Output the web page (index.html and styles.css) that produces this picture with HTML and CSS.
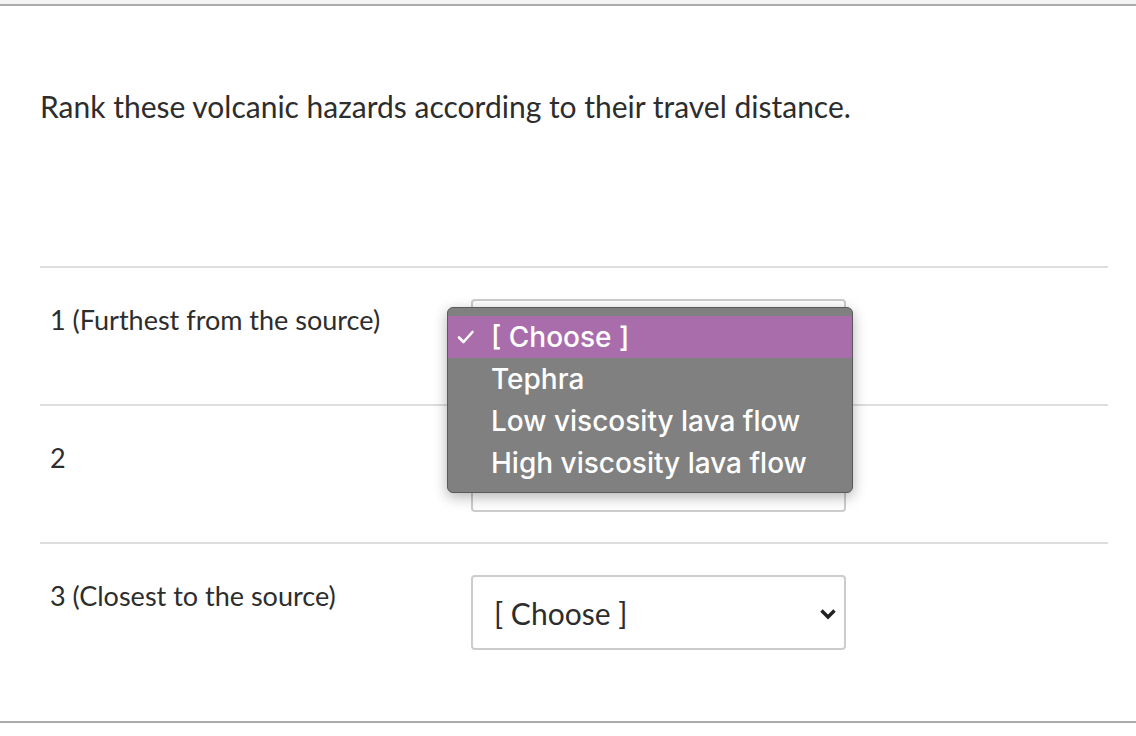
FILE: index.html
```html
<!DOCTYPE html>
<html lang="en">
<head>
    <meta charset="UTF-8">
    <title>Rank volcanic hazards</title>
    <link rel="stylesheet" href="styles.css">
</head>
<body>

<div class="top-bar"></div>

<div class="question">
    <p class="prompt">Rank these volcanic hazards according to their travel distance.</p>

    <div class="answers">
        <!-- Row 1, with the open menu -->
        <div class="answer-row">
            <div class="answer-label">1 (Furthest from the source)</div>
            <div class="select-wrap">
                <div class="select-box">
                    <span class="select-text">[ Choose ]</span>
                    <svg class="chevron" width="16" height="12" viewBox="0 0 16 12"><path d="M1.5 2.5 L8 9 L14.5 2.5" fill="none" stroke="#222" stroke-width="3.4"/></svg>
                </div>

                <div class="menu">
                    <div class="menu-item selected">
                        <svg class="check" width="18" height="14" viewBox="0 0 18 14"><path d="M2 7.5 L6.5 12 L15.5 2" fill="none" stroke="#fff" stroke-width="2.6" stroke-linecap="round" stroke-linejoin="round"/></svg>
                        [ Choose ]
                    </div>
                    <div class="menu-item">Tephra</div>
                    <div class="menu-item">Low viscosity lava flow</div>
                    <div class="menu-item">High viscosity lava flow</div>
                </div>
            </div>
        </div>

        <div class="answer-row">
            <div class="answer-label">2</div>
            <div class="select-wrap">
                <div class="select-box">
                    <span class="select-text">[ Choose ]</span>
                    <svg class="chevron" width="16" height="12" viewBox="0 0 16 12"><path d="M1.5 2.5 L8 9 L14.5 2.5" fill="none" stroke="#222" stroke-width="3.4"/></svg>
                </div>
            </div>
        </div>

        <div class="answer-row">
            <div class="answer-label">3 (Closest to the source)</div>
            <div class="select-wrap">
                <div class="select-box">
                    <span class="select-text">[ Choose ]</span>
                    <svg class="chevron" width="16" height="12" viewBox="0 0 16 12"><path d="M1.5 2.5 L8 9 L14.5 2.5" fill="none" stroke="#222" stroke-width="3.4"/></svg>
                </div>
            </div>
        </div>
    </div>
</div>

<div class="bottom-rule"></div>

</body>
</html>
```

FILE: styles.css
```css
* {
    box-sizing: border-box;
    margin: 0;
    padding: 0;
}

body {
    font-family: Lato, "Open Sans", sans-serif;
    color: #2d2d2d;
    background-color: #fff;
}

/* Top edge */
.top-bar {
    height: 6px;
    background-color: #f4f4f4;
    border-bottom: 2px solid #aaa;
}

/* Question */
.question {
    padding: 0 28px 0 40px;
}

.prompt {
    font-size: 30px;
    line-height: 36px;
    padding-top: 82px;
}

.answers {
    margin-top: 142px;
    height: 455px;
}

.answer-row {
    display: flex;
    align-items: flex-start;
    height: 138px;
    padding-top: 31px;
    border-top: 2px solid #ddd;
}

.answer-label {
    width: 431px;
    padding-left: 10px;
    margin-top: 5px;
    font-size: 27px;
    line-height: 32px;
}

/* Select box */
.select-wrap {
    position: relative;
}

.select-box {
    display: flex;
    align-items: center;
    justify-content: space-between;
    width: 375px;
    height: 75px;
    padding: 0 8px 0 21px;
    border: 2px solid #ccc;
    border-radius: 4px;
    background-color: #fff;
}

.select-text {
    font-size: 30px;
}

.chevron {
    margin-top: 2px;
}

/* Open menu */
.menu {
    position: absolute;
    z-index: 10;
    top: 8px;
    left: -24px;
    width: 406px;
    padding: 8px 0;
    background-color: #808080;
    border: 1px solid #5a5a5a;
    border-radius: 6px;
    box-shadow: 0 4px 14px rgba(0, 0, 0, 0.3);
    font-family: Inter, "Liberation Sans", sans-serif;
    font-weight: 500;
    color: #fff;
}

.menu-item {
    position: relative;
    height: 42px;
    line-height: 42px;
    padding-left: 43px;
    font-size: 28px;
}

.menu-item.selected {
    background-color: #aa6dac;
}

.check {
    position: absolute;
    left: 9px;
    top: 14px;
}

/* Bottom edge */
.bottom-rule {
    height: 2px;
    background-color: #aaa;
}
```
